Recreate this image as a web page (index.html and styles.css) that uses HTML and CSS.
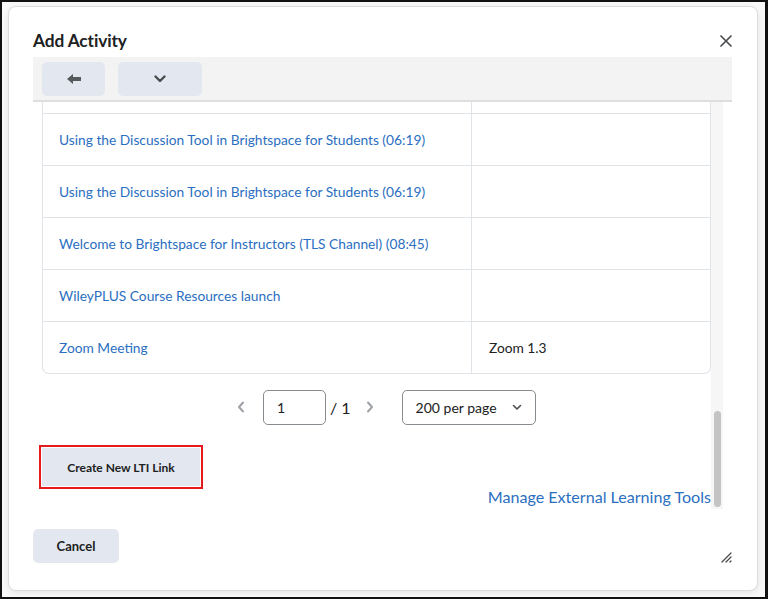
FILE: index.html
```html
<!DOCTYPE html>
<html lang="en">
<head>
<meta charset="utf-8">
<title>Add Activity</title>
<link rel="stylesheet" href="styles.css">
</head>
<body>
<div class="frame">
  <div class="dialog">
    <div class="dialog-header">
      <h1 class="title">Add Activity</h1>
      <button class="close" aria-label="Close">
        <svg width="12" height="12" viewBox="0 0 12 12"><path d="M1 1L11 11M11 1L1 11" stroke="#494c4e" stroke-width="1.7" stroke-linecap="round"/></svg>
      </button>
    </div>
    <div class="toolbar">
      <button class="tool-btn back" aria-label="Back">
        <svg width="14" height="10" viewBox="0 0 14 10"><path d="M0 5L6 0V3H14V7H6V10Z" fill="#565a5c"/></svg>
      </button>
      <button class="tool-btn more" aria-label="More">
        <svg width="12" height="8" viewBox="0 0 12 8"><path d="M1.5 1.5L6 6L10.5 1.5" fill="none" stroke="#494c4e" stroke-width="2.4" stroke-linecap="round" stroke-linejoin="round"/></svg>
      </button>
    </div>
    <div class="scroll-area">
      <div class="content">
        <div class="table">
          <div class="row partial"><div class="cell name"></div><div class="cell ver"></div></div>
          <div class="row"><div class="cell name"><a href="#">Using the Discussion Tool in Brightspace for Students (06:19)</a></div><div class="cell ver"></div></div>
          <div class="row"><div class="cell name"><a href="#">Using the Discussion Tool in Brightspace for Students (06:19)</a></div><div class="cell ver"></div></div>
          <div class="row"><div class="cell name"><a href="#">Welcome to Brightspace for Instructors (TLS Channel) (08:45)</a></div><div class="cell ver"></div></div>
          <div class="row"><div class="cell name"><a href="#">WileyPLUS Course Resources launch</a></div><div class="cell ver"></div></div>
          <div class="row last"><div class="cell name"><a href="#">Zoom Meeting</a></div><div class="cell ver">Zoom 1.3</div></div>
        </div>
        <div class="pager">
          <span class="chev">
            <svg width="8" height="12" viewBox="0 0 8 12"><path d="M6 1.5L2 6L6 10.5" fill="none" stroke="#9ea2a6" stroke-width="2" stroke-linecap="round" stroke-linejoin="round"/></svg>
          </span>
          <div class="page-input">1</div>
          <span class="page-total">/ 1</span>
          <span class="chev right">
            <svg width="8" height="12" viewBox="0 0 8 12"><path d="M2 1.5L6 6L2 10.5" fill="none" stroke="#9ea2a6" stroke-width="2" stroke-linecap="round" stroke-linejoin="round"/></svg>
          </span>
          <div class="per-page">
            <span>200 per page</span>
            <svg width="10" height="7" viewBox="0 0 10 7"><path d="M1.5 1.5L5 5L8.5 1.5" fill="none" stroke="#494c4e" stroke-width="1.6" stroke-linecap="round" stroke-linejoin="round"/></svg>
          </div>
        </div>
        <div class="create-wrap">
          <button class="btn create">Create New LTI Link</button>
        </div>
        <div class="manage-wrap">
          <a href="#" class="manage">Manage External Learning Tools</a>
        </div>
      </div>
      <div class="scrollbar"><div class="thumb"></div></div>
    </div>
    <div class="footer">
      <button class="btn cancel">Cancel</button>
      <svg class="grip" width="11" height="11" viewBox="0 0 11 11"><path d="M1 10L10 1M5 10L10 5M9 10L10 9" stroke="#494c4e" stroke-width="1.3" stroke-linecap="round"/></svg>
    </div>
  </div>
</div>
</body>
</html>
```
FILE: styles.css
```css
html, body {
  margin: 0;
  padding: 0;
  background: #111;
}
.frame {
  box-sizing: border-box;
  width: 768px;
  height: 599px;
  border: 2px solid #111;
  border-right-width: 3px;
  background: #f8f8f9;
  padding: 4px 0 0 6px;
  overflow: hidden;
  font-family: Lato, "Open Sans", sans-serif;
  color: #202122;
}
.dialog {
  box-sizing: border-box;
  width: 750px;
  height: 585px;
  background: #fff;
  border: 1px solid #dcdcdc;
  border-radius: 8px;
  box-shadow: 0 2px 6px rgba(0,0,0,0.08);
  padding: 0 0 0 24px;
  display: flex;
  flex-direction: column;
}
.dialog-header {
  display: flex;
  align-items: center;
  justify-content: space-between;
  padding: 20px 25px 0 0;
  height: 27px;
}
.title {
  margin: 0;
  font-size: 17.3px;
  font-weight: 700;
  line-height: 24px;
  letter-spacing: -0.1px;
}
.close {
  border: 0;
  background: none;
  padding: 0;
  width: 12px;
  height: 12px;
  display: flex;
}
.toolbar {
  box-sizing: border-box;
  width: 699px;
  height: 45px;
  margin-top: 3px;
  background: #f3f3f3;
  border-bottom: 2px solid #dedede;
  display: flex;
  gap: 13px;
  padding: 5px 0 0 9px;
}
.tool-btn {
  height: 34px;
  border: 0;
  border-radius: 5px;
  background: #e3e8f0;
  display: flex;
  align-items: center;
  justify-content: center;
  padding: 0;
}
.tool-btn.back { width: 63px; }
.tool-btn.more { width: 84px; }
.scroll-area {
  display: flex;
  height: 407px;
  width: 690px;
}
.content {
  flex: 1;
  overflow: hidden;
  padding-left: 9px;
}
.table {
  box-sizing: border-box;
  width: 669px;
  border: 1px solid #e0e3e8;
  border-top: 0;
  border-radius: 0 0 7px 7px;
}
.row {
  display: flex;
  height: 52px;
  border-bottom: 1px solid #e0e3e8;
  box-sizing: border-box;
}
.row.partial { height: 12px; }
.row.last { border-bottom: 0; height: 51px; }
.cell {
  display: flex;
  align-items: center;
  padding-left: 16px;
  font-size: 13.75px;
}
.cell.name {
  width: 429px;
  box-sizing: border-box;
  border-right: 1px solid #e0e3e8;
}
.cell.ver { flex: 1; padding-left: 17px; }
a {
  color: #2b6fc1;
  text-decoration: none;
}
.pager {
  display: flex;
  align-items: center;
  height: 34px;
  margin-top: 16px;
  padding-left: 195px;
}
.chev { display: flex; width: 8px; margin-right: 18px; }
.chev.right { margin-left: 15px; margin-right: 28px; }
.page-input {
  box-sizing: border-box;
  width: 63px;
  height: 35px;
  border: 1px solid #868c8f;
  border-radius: 5px;
  padding-left: 13px;
  display: flex;
  align-items: center;
  font-size: 14px;
}
.page-total {
  font-size: 16px;
  margin-left: 4px;
}
.per-page {
  box-sizing: border-box;
  width: 134px;
  height: 35px;
  border: 1px solid #868c8f;
  border-radius: 5px;
  padding: 0 13px 0 13px;
  display: flex;
  align-items: center;
  justify-content: space-between;
  font-size: 14px;
}
.create-wrap {
  margin-top: 24px;
}
.btn {
  border: 0;
  border-radius: 5px;
  background: #e3e8f0;
  font-family: Lato, "Open Sans", sans-serif;
  font-weight: 700;
  font-size: 12px;
  color: #202122;
  padding: 0;
}
.btn.create {
  width: 158px;
  height: 38px;
  border-radius: 0;
  outline: 2px solid #e8191c;
  outline-offset: 1px;
}
.manage-wrap {
  display: flex;
  justify-content: flex-end;
  margin-top: 0;
}
.manage {
  font-size: 16.1px;
  line-height: 22px;
}
.scrollbar {
  width: 12px;
  background: #f6f6f6;
  box-sizing: border-box;
  padding: 309px 0 0 3px;
}
.thumb {
  width: 7px;
  height: 96px;
  border-radius: 4px;
  background: #c4c4c4;
}
.footer {
  display: flex;
  align-items: flex-end;
  justify-content: space-between;
  padding: 20px 25px 0 0;
}
.btn.cancel {
  width: 86px;
  height: 34px;
  font-size: 13px;
}
.grip { margin-bottom: 0; }
```
